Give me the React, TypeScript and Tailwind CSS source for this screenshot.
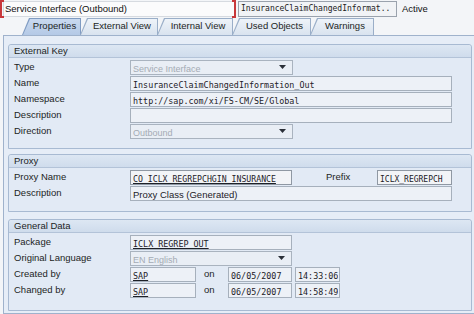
import React from "react";

const sans = "font-['Liberation_Sans',Arial,sans-serif]";
const mono = "font-['DejaVu_Sans_Mono','Liberation_Mono',monospace]";

function Arrow() {
  return (
    <svg width="7" height="4" viewBox="0 0 7 4" className="shrink-0">
      <polygon points="0,0 7,0 3.5,4" fill="#2a2f38" />
    </svg>
  );
}

function Field({
  w,
  children,
  kind = "input",
  className = "",
}: {
  w: string;
  children?: React.ReactNode;
  kind?: "input" | "link" | "select";
  className?: string;
}) {
  const base =
    kind === "link"
      ? "bg-[#f2f4f7] border-[#8f98a3]"
      : kind === "select"
      ? "bg-[#e9eef5] border-[#a9b3bf] pr-[6px]"
      : "bg-[#edf1f7] border-[#a6b0bc] pr-[1px]";
  return (
    <div
      className={`${w} h-[15px] border ${base} flex items-center pl-[2px] overflow-hidden whitespace-nowrap ${className}`}
    >
      <div className="flex-1 overflow-hidden">{children}</div>
      {kind === "select" && <Arrow />}
    </div>
  );
}

function Row({ label, children }: { label: string; children?: React.ReactNode }) {
  return (
    <div className="flex items-center h-[16px]">
      <div className={`w-[121px] pl-[5px] text-[9.5px] text-[#1c1f24] ${sans}`}>{label}</div>
      {children}
    </div>
  );
}

function Section({
  title,
  children,
  className = "",
}: {
  title: string;
  children: React.ReactNode;
  className?: string;
}) {
  return (
    <div className={`mr-[4px] border border-[#a8bad2] rounded-t-[3px] bg-[#e2eaf5] ${className}`}>
      <div
        className={`h-[13px] flex items-center pl-[5px] text-[9.5px] text-[#1c1f24] bg-gradient-to-b from-[#dde7f3] to-[#cfdcec] border-b border-[#b3c3d8] rounded-t-[3px] ${sans}`}
      >
        {title}
      </div>
      <div className="pt-[1px]">{children}</div>
    </div>
  );
}

function Tab({ label, w, selected = false }: { label: string; w: string; selected?: boolean }) {
  return (
    <div className={`relative h-[17px] ${w} -mr-[1px]`}>
      <div
        className={`absolute inset-0 [clip-path:polygon(0_100%,7px_0,100%_0,100%_100%)] ${
          selected ? "bg-[#7f9bc2]" : "bg-[#9aaec8]"
        }`}
      />
      <div
        className={`absolute left-[1px] right-[1px] top-[1px] bottom-0 [clip-path:polygon(0_100%,7px_0,100%_0,100%_100%)] ${
          selected
            ? "bg-gradient-to-b from-[#c9d9ef] to-[#b4c9e6]"
            : "bg-gradient-to-b from-[#eef3f9] to-[#d9e3ef]"
        }`}
      />
      <div
        className={`absolute inset-0 flex items-center justify-center pl-[6px] text-[9.5px] text-[#1c1f24] ${sans}`}
      >
        {label}
      </div>
    </div>
  );
}

const monoTxt = `text-[8.4px] text-[#1d2128] ${mono}`;

export default function App() {
  return (
    <div className={`w-[474px] h-[314px] overflow-hidden bg-[#f3f5f8] flex flex-col ${sans}`}>
      {/* top row */}
      <div className="h-[19px] flex items-start pt-[1px] relative shrink-0">
        <div className="ml-[3px] w-[233px] h-[16px] bg-[#fbfbfc] border border-[#d6dae0] flex items-center pl-[1px] text-[9.5px] text-[#111]">
          Service Interface (Outbound)
        </div>
        <div
          className={`ml-[2px] w-[159px] h-[16px] bg-[#f1f3f6] border border-[#9aa2ad] flex items-center pl-[2px] text-[8px] text-[#222] whitespace-nowrap overflow-hidden ${mono}`}
        >
          InsuranceClaimChangedInformat..
        </div>
        <div className="ml-[5px] h-[16px] flex items-center text-[9.5px] text-[#111]">Active</div>
        {/* red focus brackets */}
        <div className="absolute left-0 top-0 w-[4px] h-[18px] border-l-2 border-t-2 border-b-2 border-[#c8383b]" />
        <div className="absolute left-[232px] top-0 w-[4px] h-[18px] border-r-2 border-t-2 border-b-2 border-[#c8383b]" />
      </div>

      {/* tabs */}
      <div className="h-[17px] flex items-end pl-[22px] shrink-0 -mt-[1px]">
        <Tab label="Properties" w="w-[59px]" selected />
        <Tab label="External View" w="w-[78px]" />
        <Tab label="Internal View" w="w-[76px]" />
        <Tab label="Used Objects" w="w-[79px]" />
        <Tab label="Warnings" w="w-[64px]" />
      </div>

      {/* panel */}
      <div className="ml-[3px] w-[474px] flex-1 border border-[#9fb2cc] bg-[#e6edf7] pl-[4px] pt-[8px]">
        <Section title="External Key" className="pb-[9px]">
          <Row label="Type">
            <Field w="w-[163px]" kind="select">
              <span className={`text-[9px] text-[#a4abb4] ${sans}`}>Service Interface</span>
            </Field>
          </Row>
          <Row label="Name">
            <Field w="w-[322px]">
              <span className={monoTxt}>InsuranceClaimChangedInformation_Out</span>
            </Field>
          </Row>
          <Row label="Namespace">
            <Field w="w-[322px]">
              <span className={monoTxt}>http://sap.com/xi/FS-CM/SE/Global</span>
            </Field>
          </Row>
          <Row label="Description">
            <Field w="w-[322px]" />
          </Row>
          <Row label="Direction">
            <Field w="w-[163px]" kind="select">
              <span className={`text-[9px] text-[#a4abb4] ${sans}`}>Outbound</span>
            </Field>
          </Row>
        </Section>

        <Section title="Proxy" className="mt-[5px] pb-[10px]">
          <Row label="Proxy Name">
            <Field w="w-[162px]" kind="link">
              <span className={`text-[8.2px] text-[#1d2128] underline ${mono}`}>CO_ICLX_REGREPCHGIN_INSURANCE</span>
            </Field>
            <div className={`w-[85px] pl-[34px] text-[9.5px] text-[#1c1f24] ${sans}`}>Prefix</div>
            <Field w="w-[75px]" kind="link">
              <span className={`text-[8px] text-[#1d2128] ${mono}`}>ICLX_REGREPCH</span>
            </Field>
          </Row>
          <Row label="Description">
            <Field w="w-[322px]">
              <span className={`text-[9.5px] text-[#1d2128] ${sans}`}>Proxy Class (Generated)</span>
            </Field>
          </Row>
        </Section>

        <Section title="General Data" className="mt-[7px] pb-[12px]">
          <Row label="Package">
            <Field w="w-[162px]">
              <span className={`${monoTxt} underline`}>ICLX_REGREP_OUT</span>
            </Field>
          </Row>
          <Row label="Original Language">
            <Field w="w-[162px]" kind="select">
              <span className={`text-[9px] text-[#a4abb4] ${sans}`}>EN English</span>
            </Field>
          </Row>
          <Row label="Created by">
            <Field w="w-[66px]">
              <span className={`${monoTxt} underline`}>SAP</span>
            </Field>
            <div className={`w-[32px] pl-[8px] text-[9.5px] text-[#1c1f24] ${sans}`}>on</div>
            <Field w="w-[64px]">
              <span className={monoTxt}>06/05/2007</span>
            </Field>
            <Field w="w-[45px]" className="ml-[3px]">
              <span className={monoTxt}>14:33:06</span>
            </Field>
          </Row>
          <Row label="Changed by">
            <Field w="w-[66px]">
              <span className={`${monoTxt} underline`}>SAP</span>
            </Field>
            <div className={`w-[32px] pl-[8px] text-[9.5px] text-[#1c1f24] ${sans}`}>on</div>
            <Field w="w-[64px]">
              <span className={monoTxt}>06/05/2007</span>
            </Field>
            <Field w="w-[45px]" className="ml-[3px]">
              <span className={monoTxt}>14:58:49</span>
            </Field>
          </Row>
        </Section>
      </div>
    </div>
  );
}
